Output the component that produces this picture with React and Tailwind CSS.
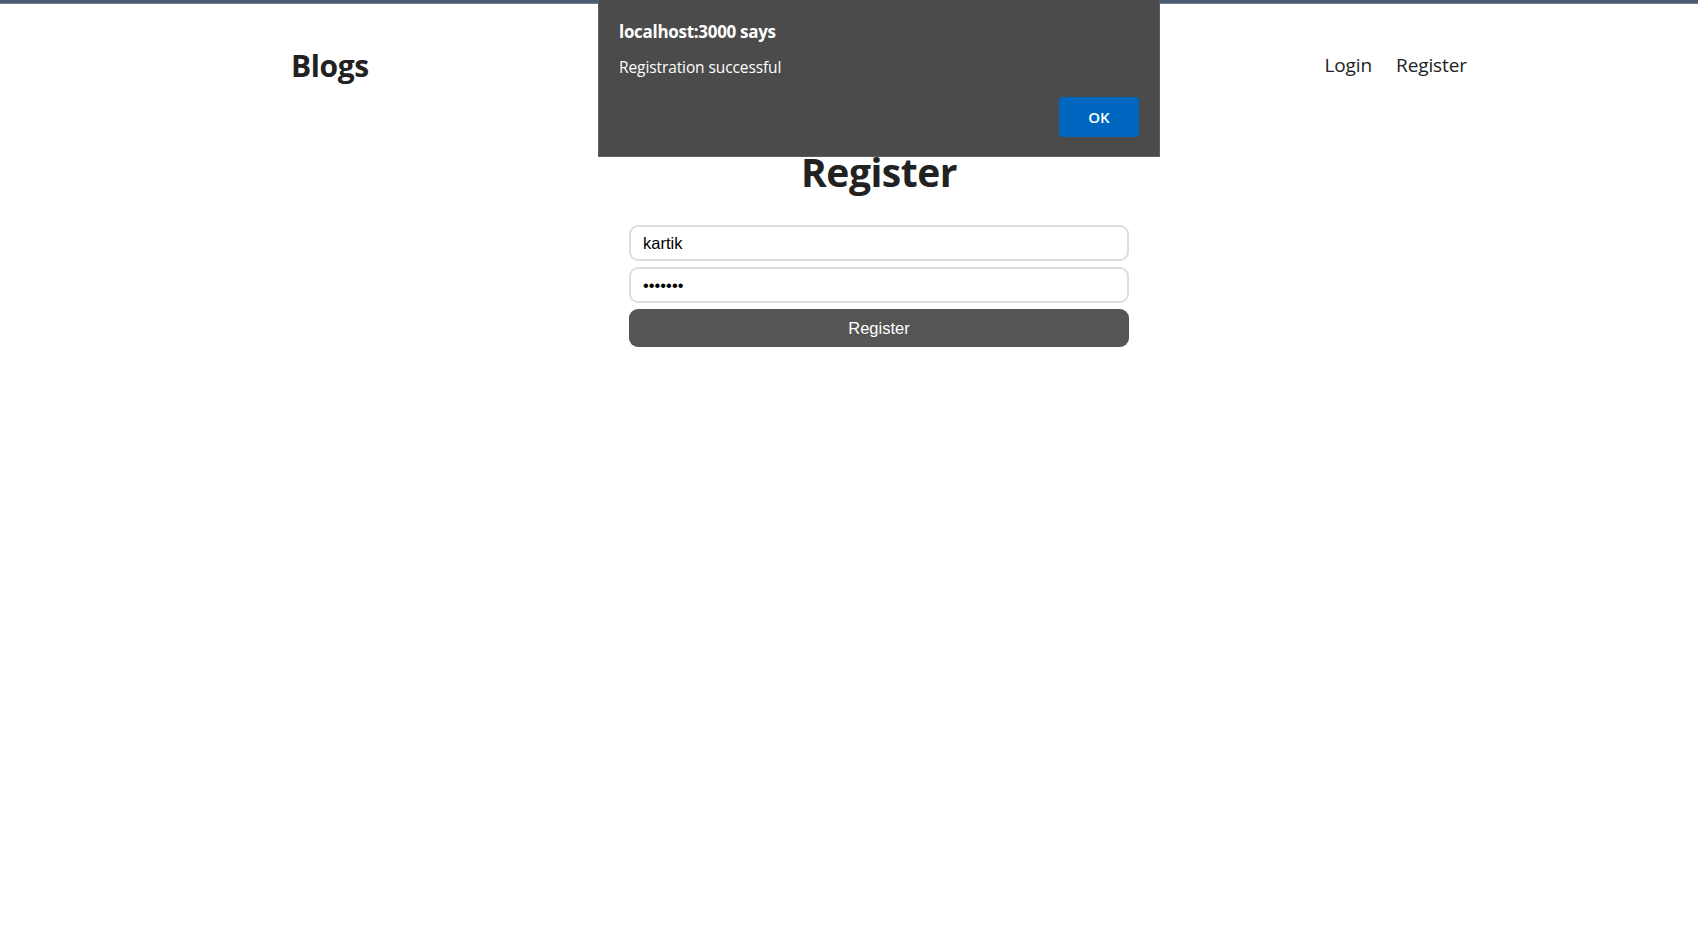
import React from 'react';

const pageFont = { fontFamily: '"Open Sans", "Noto Sans", sans-serif' };
const fieldFont = { fontFamily: '"Liberation Sans", Arial, sans-serif' };

const AlertDialog = () => (
  <div
    className="absolute left-[598px] top-0 w-[562px] h-[157px] bg-[#4b4b4b] border border-[#5f5f5f] border-t-0 px-[20px] pt-[20px] text-white"
    style={pageFont}
  >
    <p className="text-[17px] font-bold tracking-[-0.3px] leading-[24px]">localhost:3000 says</p>
    <p className="text-[15.5px] leading-[22px] mt-[12px] tracking-[-0.1px]">Registration successful</p>
    <div className="flex justify-end mt-[19px]">
      <button className="w-[80px] h-[40px] rounded-[4px] bg-[#0067c0] text-[15px] font-semibold text-white">
        OK
      </button>
    </div>
  </div>
);

export default function App() {
  return (
    <div className="relative min-h-[927px] bg-white text-[#222]" style={pageFont}>
      {/* window edge */}
      <div className="h-[4px] bg-[#4a5b72] border-b border-[#6a7d95]" />

      <div className="pl-[60px]">
        <main className="max-w-[1200px] mx-auto px-[12px] pt-[12px]">
          <header className="flex justify-between items-center mt-[28px] mb-[59px] h-[42px]">
            <a className="text-[30px] font-bold tracking-[-0.4px] text-[#222]">Blogs</a>
            <nav className="flex gap-[24px] text-[19px] tracking-[-0.1px] text-[#222]">
              <a>Login</a>
              <a>Register</a>
            </nav>
          </header>

          <h1 className="text-center text-[39px] font-bold leading-[53px] tracking-[-0.5px] text-[#222]">
            Register
          </h1>

          <form className="max-w-[500px] mx-auto mt-[27px]" style={fieldFont}>
            <input
              type="text"
              defaultValue="kartik"
              className="block w-full h-[36px] mb-[6px] px-[12px] border-2 border-[#ddd] rounded-[9px] bg-white text-[16.5px] text-black outline-none"
            />
            <input
              type="password"
              defaultValue="kartik1"
              className="block w-full h-[36px] mb-[6px] px-[12px] border-2 border-[#ddd] rounded-[9px] bg-white text-[16.5px] text-black outline-none"
            />
            <button
              type="button"
              className="block w-full h-[38px] rounded-[9px] bg-[#555] text-white text-[16.5px]"
            >
              Register
            </button>
          </form>
        </main>
      </div>

      <AlertDialog />
    </div>
  );
}
